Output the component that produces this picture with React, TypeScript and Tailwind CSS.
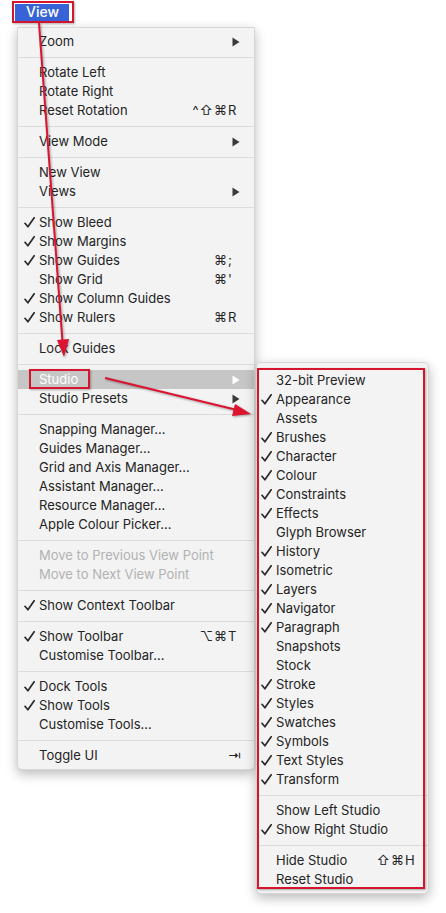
import React from 'react';

type Row =
  | 'sep'
  | {
      label: string;
      check?: boolean;
      keys?: [string, string];
      sub?: boolean;
      disabled?: boolean;
      active?: boolean;
    };

const mainMenu: Row[] = [
  { label: 'Zoom', sub: true },
  'sep',
  { label: 'Rotate Left' },
  { label: 'Rotate Right' },
  { label: 'Reset Rotation', keys: ['^⇧⌘', 'R'] },
  'sep',
  { label: 'View Mode', sub: true },
  'sep',
  { label: 'New View' },
  { label: 'Views', sub: true },
  'sep',
  { label: 'Show Bleed', check: true },
  { label: 'Show Margins', check: true },
  { label: 'Show Guides', check: true, keys: ['⌘', ';'] },
  { label: 'Show Grid', keys: ['⌘', "'"] },
  { label: 'Show Column Guides', check: true },
  { label: 'Show Rulers', check: true, keys: ['⌘', 'R'] },
  'sep',
  { label: 'Lock Guides' },
  'sep',
  { label: 'Studio', sub: true, active: true },
  { label: 'Studio Presets', sub: true },
  'sep',
  { label: 'Snapping Manager…' },
  { label: 'Guides Manager…' },
  { label: 'Grid and Axis Manager…' },
  { label: 'Assistant Manager…' },
  { label: 'Resource Manager…' },
  { label: 'Apple Colour Picker…' },
  'sep',
  { label: 'Move to Previous View Point', disabled: true },
  { label: 'Move to Next View Point', disabled: true },
  'sep',
  { label: 'Show Context Toolbar', check: true },
  'sep',
  { label: 'Show Toolbar', check: true, keys: ['⌥⌘', 'T'] },
  { label: 'Customise Toolbar…' },
  'sep',
  { label: 'Dock Tools', check: true },
  { label: 'Show Tools', check: true },
  { label: 'Customise Tools…' },
  'sep',
  { label: 'Toggle UI', keys: ['', '⇥'] },
];

const studioMenu: Row[] = [
  { label: '32-bit Preview' },
  { label: 'Appearance', check: true },
  { label: 'Assets' },
  { label: 'Brushes', check: true },
  { label: 'Character', check: true },
  { label: 'Colour', check: true },
  { label: 'Constraints', check: true },
  { label: 'Effects', check: true },
  { label: 'Glyph Browser' },
  { label: 'History', check: true },
  { label: 'Isometric', check: true },
  { label: 'Layers', check: true },
  { label: 'Navigator', check: true },
  { label: 'Paragraph', check: true },
  { label: 'Snapshots' },
  { label: 'Stock' },
  { label: 'Stroke', check: true },
  { label: 'Styles', check: true },
  { label: 'Swatches', check: true },
  { label: 'Symbols', check: true },
  { label: 'Text Styles', check: true },
  { label: 'Transform', check: true },
  'sep',
  { label: 'Show Left Studio' },
  { label: 'Show Right Studio', check: true },
  'sep',
  { label: 'Hide Studio', keys: ['⇧⌘', 'H'] },
  { label: 'Reset Studio' },
];

function Triangle({ light }: { light?: boolean }) {
  return (
    <svg width="8" height="10" viewBox="0 0 8 10" className="block">
      <path d="M0.5 0.5 L7.5 5 L0.5 9.5 Z" fill={light ? '#ffffff' : '#3a3a3a'} />
    </svg>
  );
}

function Check({ on }: { on?: boolean }) {
  return (
    <span className="flex w-[15px] items-center">
      {on && (
        <svg width="11" height="11" viewBox="0 0 11 11" className="block">
          <path
            d="M1 6.3 L3.9 9.8 L10.2 0.8"
            fill="none"
            stroke="#2a2a2a"
            strokeWidth="1.7"
            strokeLinecap="round"
            strokeLinejoin="round"
          />
        </svg>
      )}
    </span>
  );
}

function StudioSubmenu() {
  return (
    <div className="absolute left-[238px] top-[-8px] z-10 w-[173px] rounded-[5px] border border-[#d6d6d6] bg-[#f3f3f3] pt-[8px] pb-[4px] shadow-[0_4px_12px_rgba(0,0,0,0.28)]">
      {studioMenu.map((row, i) =>
        row === 'sep' ? (
          <div key={i} className="flex h-[12px] items-center">
            <div className="h-px w-full bg-[#dcdcdc]" />
          </div>
        ) : (
          <div key={i} className="flex h-[19px] items-center pl-[4px] pr-[9px] text-[#242424]">
            <Check on={row.check} />
            <span className="flex-1 whitespace-nowrap">{row.label}</span>
            {row.keys && (
              <span className="flex items-center">
                <span className="tracking-[1px]">{row.keys[0]}</span>
                <span className="w-[14px]">{row.keys[1]}</span>
              </span>
            )}
          </div>
        )
      )}
      {/* annotation box */}
      <div className="pointer-events-none absolute left-[0px] top-[5px] h-[521px] w-[168px] border-2 border-[#d5152d] shadow-[1px_1px_2px_rgba(0,0,0,0.3)]" />
    </div>
  );
}

function MenuRow({ row }: { row: Exclude<Row, 'sep'> }) {
  const color = row.disabled ? 'text-[#b2b2b2]' : row.active ? 'text-white' : 'text-[#242424]';
  return (
    <div
      className={`relative flex h-[19px] items-center pl-[6px] ${row.sub ? 'pr-[14px]' : 'pr-[12px]'} ${
        row.active ? 'bg-[#c6c6c6]' : ''
      } ${color}`}
    >
      <Check on={row.check} />
      <span className="flex-1 whitespace-nowrap">{row.label}</span>
      {row.keys && (
        <span className="flex items-center">
          <span className="tracking-[1px]">{row.keys[0]}</span>
          <span className="w-[14px]">{row.keys[1]}</span>
        </span>
      )}
      {row.sub && <Triangle light={row.active} />}
      {row.active && (
        <>
          <div className="pointer-events-none absolute left-[11px] top-[-1px] h-[20px] w-[61px] border-2 border-[#d5152d] shadow-[1px_1px_2px_rgba(0,0,0,0.3)]" />
          <StudioSubmenu />
        </>
      )}
    </div>
  );
}

export default function App() {
  return (
    <div
      className="relative h-[913px] w-[446px] overflow-hidden bg-white text-[13px] leading-[19px]"
      style={{ fontFamily: 'Inter, "DejaVu Sans", sans-serif' }}
    >
      <div className="pl-[12px] pt-[1px]">
        <div className="flex h-[22px] w-[62px] items-center border-2 border-[#d5152d] pl-[1px] shadow-[1px_1px_2px_rgba(0,0,0,0.3)]">
          <div className="flex h-[17px] w-[54px] items-center bg-[#3863d6] pl-[11px] text-[14px] font-medium leading-none text-white">
            View
          </div>
        </div>
      </div>

      <div className="ml-[17px] mt-[4px] w-[238px] rounded-b-[5px] border border-[#d6d6d6] bg-[#f3f3f3] py-[4px] shadow-[0_4px_12px_rgba(0,0,0,0.28)]">
        {mainMenu.map((row, i) =>
          row === 'sep' ? (
            <div key={i} className="flex h-[12px] items-center">
              <div className="h-px w-full bg-[#dcdcdc]" />
            </div>
          ) : (
            <MenuRow key={i} row={row} />
          )
        )}
      </div>

      {/* annotation arrows */}
      <svg
        className="pointer-events-none absolute left-0 top-0 z-20"
        width="446"
        height="913"
        viewBox="0 0 446 913"
      >
        <g style={{ filter: 'drop-shadow(1px 1px 1px rgba(0,0,0,0.35))' }}>
          <line x1="39" y1="23" x2="62.5" y2="342" stroke="#dc1430" strokeWidth="2" />
          <path d="M57 340 L69 339 L64 357 Z" fill="#dc1430" />
          <line x1="105" y1="378" x2="237" y2="410" stroke="#dc1430" strokeWidth="2" />
          <path d="M235 404 L251 414 L232 416 Z" fill="#dc1430" />
        </g>
      </svg>
    </div>
  );
}
